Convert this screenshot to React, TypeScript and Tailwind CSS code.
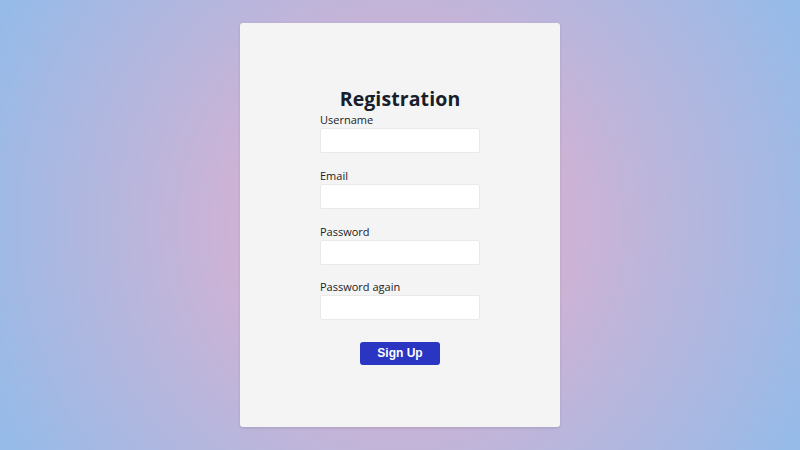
import React from "react";

const fields = [
  { id: "username", label: "Username", type: "text" },
  { id: "email", label: "Email", type: "email" },
  { id: "password", label: "Password", type: "password" },
  { id: "password2", label: "Password again", type: "password" },
];

export default function App() {
  return (
    <div className="flex h-[450px] w-full items-center justify-center bg-[radial-gradient(circle,#eeaeca_0%,#94bbe9_100%)] font-['Open_Sans',sans-serif]">
      <div className="flex h-[404px] w-[320px] flex-col items-center justify-center rounded-[3px] bg-[#f4f4f4] shadow-[0_1px_3px_rgba(0,0,0,0.12)]">
        <form className="flex w-[160px] flex-col" onSubmit={(e) => e.preventDefault()}>
          <h1 className="h-[27px] text-center text-[19.5px] leading-[27px] font-bold tracking-[0.1px] text-[#17202a]">
            Registration
          </h1>
          {fields.map((f) => (
            <div key={f.id} className="mb-[14.6px] flex flex-col">
              <label htmlFor={f.id} className="h-[16px] text-[11px] leading-[16px] text-[#222]">
                {f.label}
              </label>
              <input
                id={f.id}
                type={f.type}
                className="h-[25px] w-[160px] rounded-[2px] border border-[#e9e9e9] bg-white px-2 text-[11px] outline-none"
              />
            </div>
          ))}
          <button
            type="submit"
            className="mx-auto mt-[7px] h-[23px] w-[80px] rounded-[3px] bg-[#2a35c2] font-['Liberation_Sans',Arial,sans-serif] text-[12px] font-bold text-white"
          >
            Sign Up
          </button>
        </form>
      </div>
    </div>
  );
}
